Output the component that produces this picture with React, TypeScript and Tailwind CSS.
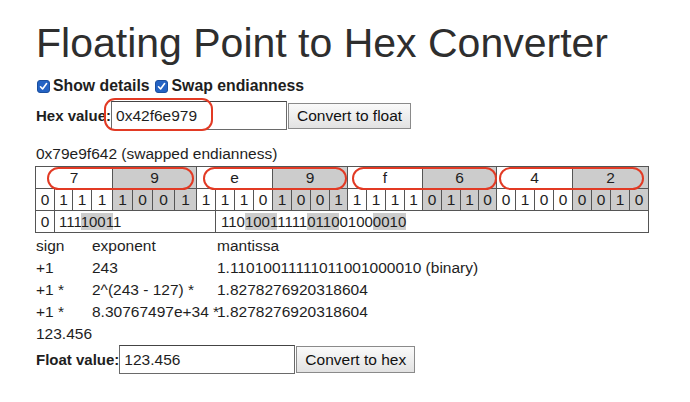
import React from 'react';

const nibbles = ['7', '9', 'e', '9', 'f', '6', '4', '2'];
const nibbleBits = ['0111', '1001', '1110', '1001', '1111', '0110', '0100', '0010'];
// measured column widths per nibble (4 bit columns each)
const colWidths = [
  19, 18, 19, 21,
  20, 20, 22, 22,
  19, 19, 19, 19,
  19, 19, 19, 18,
  19, 19, 19, 18,
  19, 19, 18, 18,
  19, 19, 19, 19,
  19, 19, 19, 19,
];

const Check = () => (
  <span className="inline-flex items-center justify-center w-[13px] h-[13px] rounded-[3px] bg-[#2463c4] border border-[#1b4f9e] shrink-0">
    <svg width="9" height="9" viewBox="0 0 9 9" fill="none">
      <path d="M1.5 4.8 L3.6 7 L7.6 1.6" stroke="white" strokeWidth="1.6" strokeLinecap="round" strokeLinejoin="round" />
    </svg>
  </span>
);

const Grey = ({ children }: { children: React.ReactNode }) => (
  <span className="bg-[#cccccc]">{children}</span>
);

const ovals = [
  { left: 'left-[12px]', w: 'w-[147px]' },
  { left: 'left-[168px]', w: 'w-[144px]' },
  { left: 'left-[317px]', w: 'w-[145px]' },
  { left: 'left-[464px]', w: 'w-[145px]' },
];

export default function App() {
  return (
    <div className="w-[690px] h-[402px] bg-white overflow-hidden pl-[36px] text-[#1e1e1e] font-['Liberation_Sans',Arial,sans-serif] text-[15.5px] leading-[20px]">
      {/* Title */}
      <h1 className="pt-[19px] text-[41px] leading-[48px] text-[#2e2e2e] whitespace-nowrap">
        Floating Point to Hex Converter
      </h1>

      {/* Options */}
      <div className="mt-[9px] flex items-center font-bold h-[20px] text-[15.8px]">
        <span className="ml-[1px]"><Check /></span>
        <span className="ml-[3px]">Show details</span>
        <span className="ml-[5px]"><Check /></span>
        <span className="ml-[4px]">Swap endianness</span>
      </div>

      {/* Hex input row */}
      <div className="relative mt-[5px] flex items-center h-[29px]">
        <span className="font-bold text-[15px]">Hex value:</span>
        <div className="h-[29px] w-[176px] border border-[#6a6a6a] border-t-[#444] bg-white flex items-center pl-[4px]">
          0x42f6e979
        </div>
        <button className="ml-[1px] h-[26px] px-[8px] border border-[#8a8a8a] bg-gradient-to-b from-[#fafafa] to-[#e2e2e2] text-[15.5px] leading-[20px] text-[#111]">
          Convert to float
        </button>
        <div className="absolute left-[68px] top-[-3px] w-[109px] h-[33px] rounded-[11px] border-2 border-[#e23a24]" />
      </div>

      <div className="mt-[14px]">0x79e9f642 (swapped endianness)</div>

      {/* Bits table */}
      <div className="relative mt-[2px] w-[614px] -ml-[1px]">
        <table className="table-fixed border-collapse w-[614px] border border-[#222] text-[15.5px] leading-[20px]">
          <colgroup>
            {colWidths.map((w, i) => (
              <col key={i} style={{ width: w }} />
            ))}
          </colgroup>
          <tbody>
            <tr className="h-[22px]">
              {nibbles.map((n, i) => (
                <td
                  key={i}
                  colSpan={4}
                  className={`border border-[#555] text-center p-0 ${i % 2 ? 'bg-[#cccccc]' : 'bg-white'}`}
                >
                  {n}
                </td>
              ))}
            </tr>
            <tr className="h-[22px]">
              {nibbleBits.map((bits, i) =>
                bits.split('').map((b, j) => (
                  <td
                    key={`${i}-${j}`}
                    className={`border border-[#555] text-center p-0 ${i % 2 ? 'bg-[#cccccc]' : 'bg-white'}`}
                  >
                    {b}
                  </td>
                ))
              )}
            </tr>
            <tr className="h-[22px] text-[15px]">
              <td className="border border-[#555] text-center p-0 text-[15.5px]">0</td>
              <td colSpan={8} className="border border-[#555] pl-[4px] py-0 whitespace-nowrap">
                111<Grey>1001</Grey>1
              </td>
              <td colSpan={23} className="border border-[#555] pl-[5px] py-0 whitespace-nowrap">
                110<Grey>1001</Grey>1111<Grey>0110</Grey>0100<Grey>0010</Grey>
              </td>
            </tr>
          </tbody>
        </table>
        {ovals.map((o, i) => (
          <div
            key={i}
            className={`absolute top-[1px] h-[23px] rounded-full border-2 border-[#e23a24] ${o.left} ${o.w}`}
          />
        ))}
      </div>

      {/* Details */}
      <div className="mt-[2px] grid grid-cols-[56px_125px_auto] leading-[22px] whitespace-nowrap">
        <span>sign</span>
        <span>exponent</span>
        <span>mantissa</span>
        <span>+1</span>
        <span>243</span>
        <span>1.11010011111011001000010 (binary)</span>
        <span>+1 *</span>
        <span>2^(243 - 127) *</span>
        <span>1.8278276920318604</span>
        <span>+1 *</span>
        <span>8.30767497e+34 *</span>
        <span>1.8278276920318604</span>
        <span className="col-span-3">123.456</span>
      </div>

      {/* Float input row */}
      <div className="mt-[0px] flex items-center h-[29px]">
        <span className="font-bold text-[15px]">Float value:</span>
        <div className="h-[29px] w-[176px] border border-[#6a6a6a] border-t-[#444] bg-white flex items-center pl-[4px]">
          123.456
        </div>
        <button className="ml-[1px] h-[27px] px-[8px] border border-[#8a8a8a] bg-gradient-to-b from-[#fafafa] to-[#e2e2e2] text-[15.5px] leading-[20px] text-[#111]">
          Convert to hex
        </button>
      </div>
    </div>
  );
}
